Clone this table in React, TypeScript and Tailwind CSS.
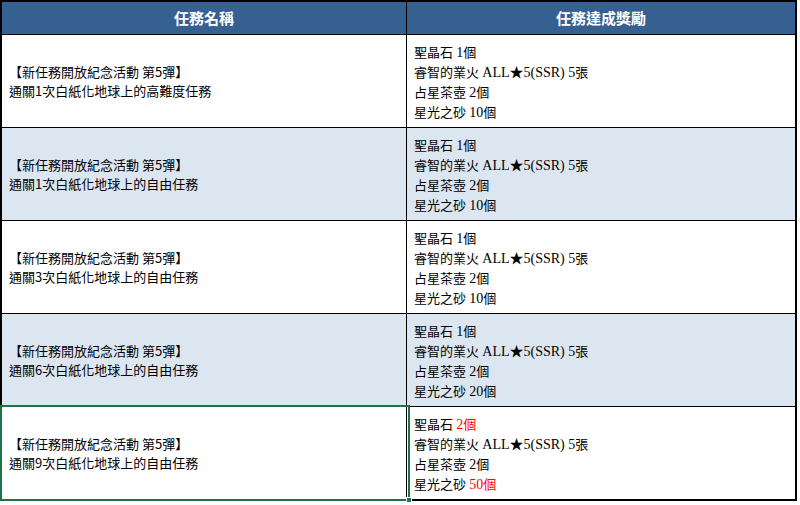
import React from "react";

type Row = {
  title: string;
  bg: string;
  first: string;
  firstRed?: boolean;
  last: string;
  lastRed?: boolean;
};

const rows: Row[] = [
  { title: "通關1次白紙化地球上的高難度任務", bg: "bg-white", first: "1", last: "10" },
  { title: "通關1次白紙化地球上的自由任務", bg: "bg-[#dce6f1]", first: "1", last: "10" },
  { title: "通關3次白紙化地球上的自由任務", bg: "bg-white", first: "1", last: "10" },
  { title: "通關6次白紙化地球上的自由任務", bg: "bg-[#dce6f1]", first: "1", last: "20" },
  { title: "通關9次白紙化地球上的自由任務", bg: "bg-white", first: "2", firstRed: true, last: "50", lastRed: true },
];

const sans = "font-['Noto_Sans_CJK_TC','Noto_Sans',sans-serif]";
const serif = "font-['Liberation_Serif','Noto_Sans_CJK_TC',serif]";

function L({ children }: { children: React.ReactNode }) {
  return <span className="text-[14px]">{children}</span>;
}

export default function App() {
  return (
    <div className="w-[800px] h-[505px] bg-white">
      <div className="relative w-[797px] border-2 border-black">
        <div className="grid grid-cols-[405px_1fr] h-[33px] bg-[#366092] border-b border-black">
          <div className={`flex items-center justify-center border-r border-black text-white font-bold text-[15px] ${sans}`}>
            任務名稱
          </div>
          <div className={`flex items-center justify-center text-white font-bold text-[15px] ${sans}`}>
            任務達成獎勵
          </div>
        </div>
        {rows.map((r, i) => (
          <div
            key={i}
            className={`grid grid-cols-[405px_1fr] ${i < rows.length - 1 ? "h-[93px] border-b border-black" : "h-[92px]"} ${r.bg}`}
          >
            <div className={`flex flex-col justify-center pl-[7px] border-r border-black text-[13px] leading-[19px] text-black ${sans}`}>
              <div>【新任務開放紀念活動 第5彈】</div>
              <div>{r.title}</div>
            </div>
            <div className={`flex flex-col justify-center pl-[7px] pt-[4px] text-[13px] leading-[20px] text-black ${serif}`}>
              <div>
                聖晶石 <span className={r.firstRed ? "text-[#ff0000]" : ""}><L>{r.first}</L>個</span>
              </div>
              <div>睿智的業火 <L>ALL★5(SSR) 5</L>張</div>
              <div>占星茶壺 <L>2</L>個</div>
              <div>
                星光之砂 <span className={r.lastRed ? "text-[#ff0000]" : ""}><L>{r.last}</L>個</span>
              </div>
            </div>
          </div>
        ))}
        <div className="absolute left-[-2px] bottom-[-2px] w-[410px] h-[96px] border-2 border-[#217346] pointer-events-none" />
        <div className="absolute left-[404px] bottom-[-4px] w-[6px] h-[6px] bg-[#217346] border border-white" />
      </div>
    </div>
  );
}
